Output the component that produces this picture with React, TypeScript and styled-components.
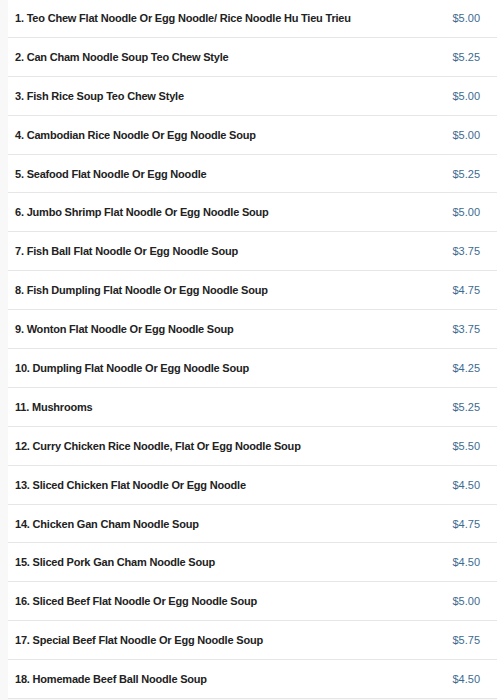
import React, { FC } from 'react'
import styled, { createGlobalStyle } from 'styled-components'

interface Item {
  name: string
  price: string
}

const items: Item[] = [
  { name: 'Teo Chew Flat Noodle Or Egg Noodle/ Rice Noodle Hu Tieu Trieu', price: '$5.00' },
  { name: 'Can Cham Noodle Soup Teo Chew Style', price: '$5.25' },
  { name: 'Fish Rice Soup Teo Chew Style', price: '$5.00' },
  { name: 'Cambodian Rice Noodle Or Egg Noodle Soup', price: '$5.00' },
  { name: 'Seafood Flat Noodle Or Egg Noodle', price: '$5.25' },
  { name: 'Jumbo Shrimp Flat Noodle Or Egg Noodle Soup', price: '$5.00' },
  { name: 'Fish Ball Flat Noodle Or Egg Noodle Soup', price: '$3.75' },
  { name: 'Fish Dumpling Flat Noodle Or Egg Noodle Soup', price: '$4.75' },
  { name: 'Wonton Flat Noodle Or Egg Noodle Soup', price: '$3.75' },
  { name: 'Dumpling Flat Noodle Or Egg Noodle Soup', price: '$4.25' },
  { name: 'Mushrooms', price: '$5.25' },
  { name: 'Curry Chicken Rice Noodle, Flat Or Egg Noodle Soup', price: '$5.50' },
  { name: 'Sliced Chicken Flat Noodle Or Egg Noodle', price: '$4.50' },
  { name: 'Chicken Gan Cham Noodle Soup', price: '$4.75' },
  { name: 'Sliced Pork Gan Cham Noodle Soup', price: '$4.50' },
  { name: 'Sliced Beef Flat Noodle Or Egg Noodle Soup', price: '$5.00' },
  { name: 'Special Beef Flat Noodle Or Egg Noodle Soup', price: '$5.75' },
  { name: 'Homemade Beef Ball Noodle Soup', price: '$4.50' },
]

const GlobalStyle = createGlobalStyle`
  body {
    margin: 0;
    background: #f8f8f8;
    font-family: "Liberation Sans", Arial, sans-serif;
  }
`

const MenuList = styled.ul`
  list-style: none;
  margin: -1px 0 0 8px;
  padding: 0;
  background: #fff;
`

const MenuRow = styled.li`
  box-sizing: border-box;
  display: flex;
  align-items: center;
  justify-content: space-between;
  height: 38.9px;
  padding: 0 17px 0 7px;
  border-bottom: 1px solid #e6e6e6;
`

const ItemName = styled.span`
  font-size: 11px;
  font-weight: bold;
  letter-spacing: -0.2px;
  color: #222;
`

const ItemPrice = styled.span`
  font-size: 11px;
  color: #3d6b8f;
`

const App: FC = () => (
  <>
    <GlobalStyle />
    <MenuList>
      {items.map((item, index) => (
        <MenuRow key={`item-${index}`}>
          <ItemName>
            {index + 1}. {item.name}
          </ItemName>
          <ItemPrice>{item.price}</ItemPrice>
        </MenuRow>
      ))}
    </MenuList>
  </>
)

export default App
